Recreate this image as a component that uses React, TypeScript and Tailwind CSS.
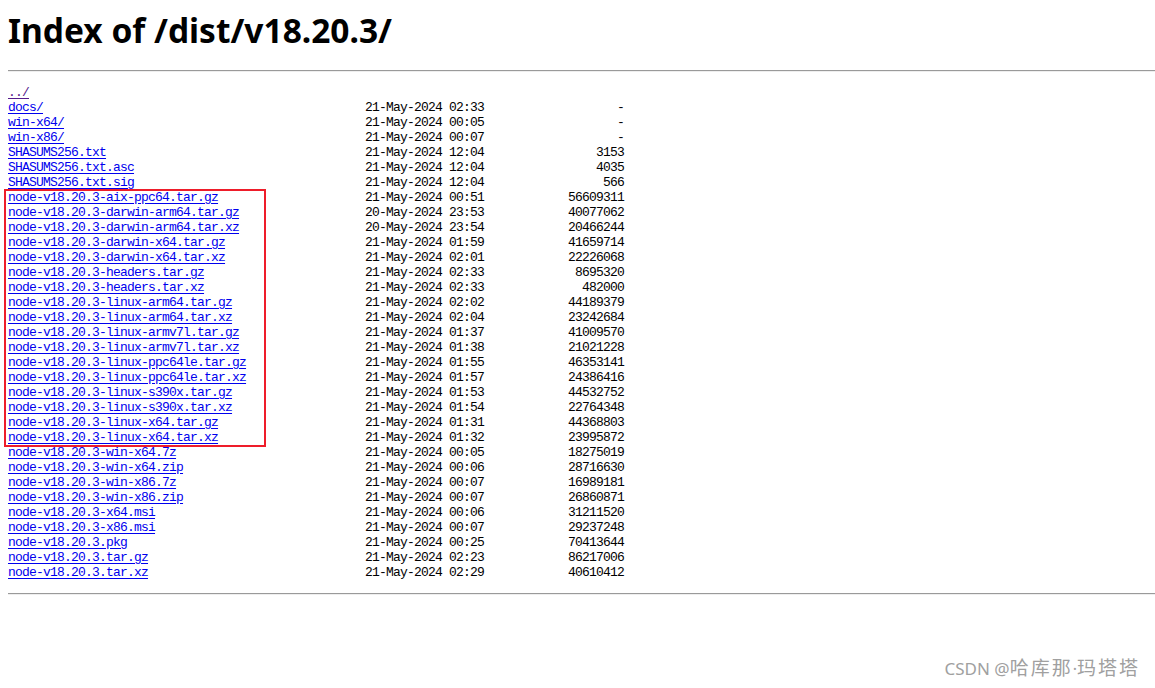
import React from "react";

type Row = { name: string; date: string; size: string; visited?: boolean };

const rows: Row[] = [
  { name: "../", date: "", size: "", visited: true },
  { name: "docs/", date: "21-May-2024 02:33", size: "-" },
  { name: "win-x64/", date: "21-May-2024 00:05", size: "-" },
  { name: "win-x86/", date: "21-May-2024 00:07", size: "-" },
  { name: "SHASUMS256.txt", date: "21-May-2024 12:04", size: "3153" },
  { name: "SHASUMS256.txt.asc", date: "21-May-2024 12:04", size: "4035" },
  { name: "SHASUMS256.txt.sig", date: "21-May-2024 12:04", size: "566" },
  { name: "node-v18.20.3-aix-ppc64.tar.gz", date: "21-May-2024 00:51", size: "56609311" },
  { name: "node-v18.20.3-darwin-arm64.tar.gz", date: "20-May-2024 23:53", size: "40077062" },
  { name: "node-v18.20.3-darwin-arm64.tar.xz", date: "20-May-2024 23:54", size: "20466244" },
  { name: "node-v18.20.3-darwin-x64.tar.gz", date: "21-May-2024 01:59", size: "41659714" },
  { name: "node-v18.20.3-darwin-x64.tar.xz", date: "21-May-2024 02:01", size: "22226068" },
  { name: "node-v18.20.3-headers.tar.gz", date: "21-May-2024 02:33", size: "8695320" },
  { name: "node-v18.20.3-headers.tar.xz", date: "21-May-2024 02:33", size: "482000" },
  { name: "node-v18.20.3-linux-arm64.tar.gz", date: "21-May-2024 02:02", size: "44189379" },
  { name: "node-v18.20.3-linux-arm64.tar.xz", date: "21-May-2024 02:04", size: "23242684" },
  { name: "node-v18.20.3-linux-armv7l.tar.gz", date: "21-May-2024 01:37", size: "41009570" },
  { name: "node-v18.20.3-linux-armv7l.tar.xz", date: "21-May-2024 01:38", size: "21021228" },
  { name: "node-v18.20.3-linux-ppc64le.tar.gz", date: "21-May-2024 01:55", size: "46353141" },
  { name: "node-v18.20.3-linux-ppc64le.tar.xz", date: "21-May-2024 01:57", size: "24386416" },
  { name: "node-v18.20.3-linux-s390x.tar.gz", date: "21-May-2024 01:53", size: "44532752" },
  { name: "node-v18.20.3-linux-s390x.tar.xz", date: "21-May-2024 01:54", size: "22764348" },
  { name: "node-v18.20.3-linux-x64.tar.gz", date: "21-May-2024 01:31", size: "44368803" },
  { name: "node-v18.20.3-linux-x64.tar.xz", date: "21-May-2024 01:32", size: "23995872" },
  { name: "node-v18.20.3-win-x64.7z", date: "21-May-2024 00:05", size: "18275019" },
  { name: "node-v18.20.3-win-x64.zip", date: "21-May-2024 00:06", size: "28716630" },
  { name: "node-v18.20.3-win-x86.7z", date: "21-May-2024 00:07", size: "16989181" },
  { name: "node-v18.20.3-win-x86.zip", date: "21-May-2024 00:07", size: "26860871" },
  { name: "node-v18.20.3-x64.msi", date: "21-May-2024 00:06", size: "31211520" },
  { name: "node-v18.20.3-x86.msi", date: "21-May-2024 00:07", size: "29237248" },
  { name: "node-v18.20.3.pkg", date: "21-May-2024 00:25", size: "70413644" },
  { name: "node-v18.20.3.tar.gz", date: "21-May-2024 02:23", size: "86217006" },
  { name: "node-v18.20.3.tar.xz", date: "21-May-2024 02:29", size: "40610412" },
];

function FileRow({ row }: { row: Row }) {
  return (
    <div className="flex h-[15px] items-center whitespace-pre">
      <div className="w-[357px]">
        <a
          href="#"
          className={
            row.visited
              ? "text-[#551a8b] underline underline-offset-[2px]"
              : "text-[#0000ee] underline underline-offset-[2px]"
          }
        >
          {row.name}
        </a>
      </div>
      <div className="w-[119px] text-black">{row.date}</div>
      <div className="w-[140px] text-right text-black">{row.size}</div>
    </div>
  );
}

export default function App() {
  return (
    <div className="relative min-h-[688px] w-full bg-white pl-2 font-['Noto_Sans',sans-serif] text-black">
      <h1 className="pt-[8px] text-[33.5px] font-bold leading-[45px] font-['Noto_Sans','Noto_Sans_CJK_SC',sans-serif]">
        Index of /dist/v18.20.3/
      </h1>
      <div className="mt-[17px] h-[2px] border-t border-[#9a9a9a] border-b border-b-[#eeeeee]" />
      <div className="relative mt-[13px] font-['Liberation_Mono',monospace] text-[13px] tracking-[-0.8px]">
        {rows.map((r) => (
          <FileRow key={r.name} row={r} />
        ))}
        <div className="pointer-events-none absolute left-[-4px] top-[104px] h-[258px] w-[262px] border-2 border-[#ee1d2a]" />
      </div>
      <div className="mt-[13px] h-[2px] border-t border-[#9a9a9a] border-b border-b-[#eeeeee]" />
      <div className="absolute bottom-[7px] right-[15px] flex items-baseline text-[#a0a0a0]">
        <span className="font-['Noto_Sans',sans-serif] text-[17px]">CSDN @</span>
        <span className="font-['Noto_Sans_CJK_SC',sans-serif] text-[19px] tracking-[2px]">哈库那</span>
        <span className="font-['Noto_Sans',sans-serif] text-[16px]">·</span>
        <span className="font-['Noto_Sans_CJK_SC',sans-serif] text-[19px] tracking-[2px]">玛塔塔</span>
      </div>
    </div>
  );
}
